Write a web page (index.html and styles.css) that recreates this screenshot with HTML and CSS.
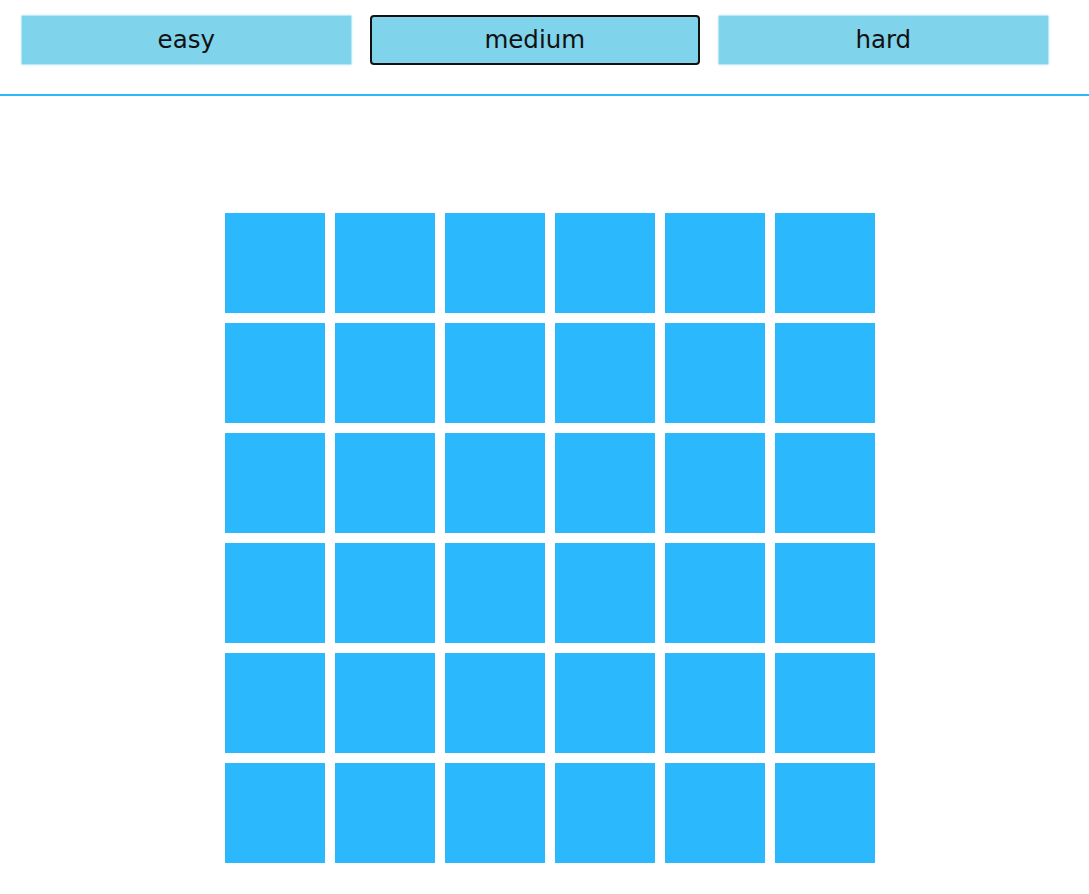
FILE: index.html
```html
<!DOCTYPE html>
<html>
<head>
<meta charset="utf-8">
<link rel="stylesheet" href="styles.css">
</head>
<body>
<header class="bar">
  <button class="level">easy</button>
  <button class="level active">medium</button>
  <button class="level">hard</button>
</header>
<main class="board">
  <div class="grid">
    <div class="tile"></div><div class="tile"></div><div class="tile"></div><div class="tile"></div><div class="tile"></div><div class="tile"></div>
    <div class="tile"></div><div class="tile"></div><div class="tile"></div><div class="tile"></div><div class="tile"></div><div class="tile"></div>
    <div class="tile"></div><div class="tile"></div><div class="tile"></div><div class="tile"></div><div class="tile"></div><div class="tile"></div>
    <div class="tile"></div><div class="tile"></div><div class="tile"></div><div class="tile"></div><div class="tile"></div><div class="tile"></div>
    <div class="tile"></div><div class="tile"></div><div class="tile"></div><div class="tile"></div><div class="tile"></div><div class="tile"></div>
    <div class="tile"></div><div class="tile"></div><div class="tile"></div><div class="tile"></div><div class="tile"></div><div class="tile"></div>
  </div>
</main>
</body>
</html>
```
FILE: styles.css
```css
html, body {
  margin: 0;
  padding: 0;
  background: #ffffff;
}
body {
  font-family: "DejaVu Sans", "Noto Sans", sans-serif;
  overflow: hidden;
}
.bar {
  display: flex;
  gap: 18px;
  padding: 15px 0 0 21px;
  box-sizing: border-box;
  border-bottom: 2px solid #2bb8fc;
  height: 96px;
}
.level {
  width: 330.5px;
  height: 49.5px;
  box-sizing: border-box;
  background: #7fd3eb;
  border: 1px solid #b9e8fb;
  border-radius: 2px;
  box-shadow: 0 0 2px #bfe9fb;
  font-family: "DejaVu Sans", "Noto Sans", sans-serif;
  font-size: 24.5px;
  color: #111111;
  padding: 0;
  cursor: pointer;
}
.level.active {
  border: 2px solid #111111;
  border-radius: 4px;
  box-shadow: none;
}
.board {
  display: flex;
  padding: 117px 0 0 225px;
}
.grid {
  display: grid;
  grid-template-columns: repeat(6, 100px);
  grid-auto-rows: 100px;
  gap: 10px;
}
.tile {
  background: #2bb8fc;
}
```
